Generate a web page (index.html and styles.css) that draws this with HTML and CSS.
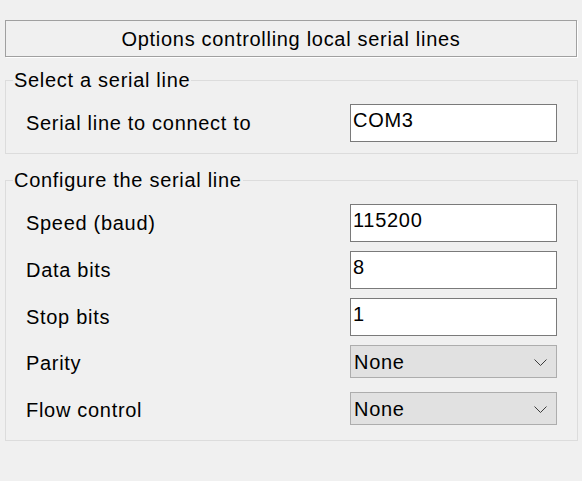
FILE: index.html
```html
<!DOCTYPE html>
<html>
<head>
<meta charset="utf-8">
<link rel="stylesheet" href="styles.css">
</head>
<body>
<div class="panel">
  <div class="title">Options controlling local serial lines</div>

  <fieldset class="group group-select">
    <legend class="group-label">Select a serial line</legend>
    <div class="row row-text">
      <span class="label">Serial line to connect to</span>
      <div class="edit">COM3</div>
    </div>
  </fieldset>

  <fieldset class="group group-config">
    <legend class="group-label">Configure the serial line</legend>
    <div class="row row-text">
      <span class="label">Speed (baud)</span>
      <div class="edit">115200</div>
    </div>
    <div class="row row-text">
      <span class="label">Data bits</span>
      <div class="edit">8</div>
    </div>
    <div class="row row-text">
      <span class="label">Stop bits</span>
      <div class="edit">1</div>
    </div>
    <div class="row row-combo">
      <span class="label">Parity</span>
      <div class="combo"><span class="combo-value">None</span><svg class="chevron" width="13" height="7" viewBox="0 0 13 7"><polyline points="0.5,0.5 6.5,6.5 12.5,0.5" fill="none" stroke="#3c3c3c" stroke-width="1"/></svg></div>
    </div>
    <div class="row row-combo row-last">
      <span class="label">Flow control</span>
      <div class="combo"><span class="combo-value">None</span><svg class="chevron" width="13" height="7" viewBox="0 0 13 7"><polyline points="0.5,0.5 6.5,6.5 12.5,0.5" fill="none" stroke="#3c3c3c" stroke-width="1"/></svg></div>
    </div>
  </fieldset>
</div>
</body>
</html>
```

FILE: styles.css
```css
html, body {
  margin: 0;
  padding: 0;
  background: #f0f0f0;
}

body {
  font-family: "Liberation Sans", Arial, sans-serif;
  font-size: 20px;
  letter-spacing: 0.7px;
  line-height: 22px;
  color: #000;
}

.panel {
  width: 573px;
  padding: 20px 0 0 5px;
}

.title {
  box-sizing: border-box;
  width: 572px;
  height: 37px;
  border: 1px solid #a0a0a0;
  box-shadow: 1px 1px 0 #ffffff;
  display: flex;
  align-items: center;
  justify-content: center;
}

.group {
  margin: 0;
  border: 1px solid #dcdcdc;
  padding: 13px 20px 11px 20px;
  min-width: 0;
}

.group-select {
  margin-top: 12px;
}

.group-config {
  margin-top: 15px;
  padding-bottom: 15px;
}

.group-label {
  padding: 0 1px;
  margin-left: -13px;
  line-height: 22px;
}

.row {
  display: flex;
  justify-content: space-between;
  align-items: flex-start;
}

.row-text {
  height: 38px;
  margin-bottom: 9px;
}

.row-combo {
  height: 33px;
  margin-bottom: 14px;
}

.group-select .row-text,
.row-last {
  margin-bottom: 0;
}

.label {
  display: block;
}

.row-text .label {
  padding-top: 8px;
}

.row-combo .label {
  padding-top: 7px;
}

.edit {
  box-sizing: border-box;
  width: 207px;
  height: 38px;
  background: #ffffff;
  border: 1px solid #7a7a7a;
  padding: 4px 2px 0 2px;
}

.combo {
  box-sizing: border-box;
  width: 207px;
  height: 33px;
  background: #e1e1e1;
  border: 1px solid #adadad;
  padding: 5px 9px 0 3px;
  display: flex;
  justify-content: space-between;
  align-items: flex-start;
}

.chevron {
  margin-top: 8px;
}
```
